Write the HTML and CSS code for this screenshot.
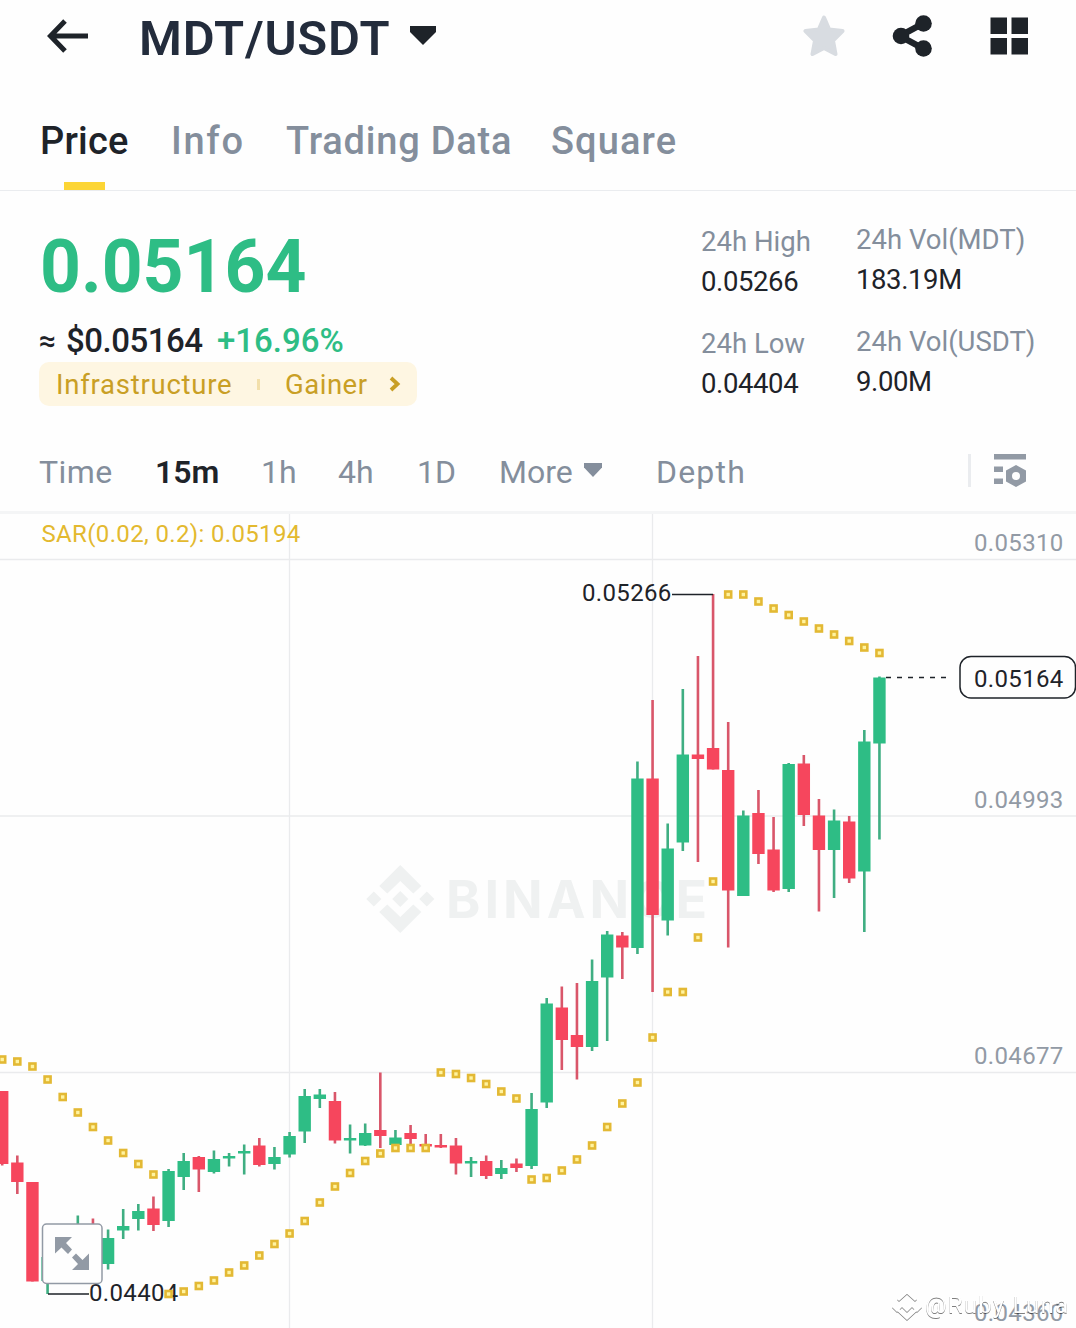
FILE: index.html
```
<!DOCTYPE html>
<html lang="en">
<head>
  <meta charset="UTF-8">
  <meta name="viewport" content="width=device-width, initial-scale=1.0">
  <title>MDT/USDT</title>
  <link rel="stylesheet" href="styles.css">
</head>
<body>
  <header>
    <svg class="back" width="42" height="34" viewBox="0 0 42 34"><path d="M41 17H4M18 2L3.500 17L18 32" fill="none" stroke="#1e2329" stroke-width="5"/></svg>
    <h1>MDT/USDT</h1>
    <svg class="pair-caret" width="26" height="19" viewBox="0 0 26 19"><path d="M0 0H26V6L13 19L0 6Z" fill="#1e2329"/></svg>
    <div class="actions">
      <svg width="42" height="42" viewBox="0 0 42 42"><path d="M21 2.500L26.200 14.500L39.500 16L30 25.500L32.500 39L21 33L9.500 39L12 25.500L2.500 16L15.800 14.500Z" fill="#d8dce1" stroke="#d8dce1" stroke-width="4" stroke-linejoin="round"/></svg>
      <svg class="share" width="40" height="42" viewBox="0 0 40 42"><path d="M32 8L8 21L32 34" fill="none" stroke="#1e2329" stroke-width="6.500"/><g fill="#1e2329"><circle cx="31.500" cy="8.500" r="8.300"/><circle cx="9" cy="21" r="8.300"/><circle cx="31.500" cy="33.500" r="8.300"/></g></svg>
      <svg class="grid-icon" width="38" height="38" viewBox="0 0 38 38"><path d="M.5.500H17V17H.5ZM21.500.500H38V17H21.500ZM.5 21H17V37.500H.5ZM21.500 21H38V37.500H21.500Z" fill="#1e2329"/></svg>
    </div>
  </header>

  <nav class="tabs">
    <a class="tab active">Price</a>
    <a class="tab info">Info</a>
    <a class="tab trading">Trading Data</a>
    <a class="tab square">Square</a>
  </nav>

  <section class="summary">
    <div class="quote">
      <div class="price">0.05164</div>
      <div class="fiat"><span class="approx">≈</span><span class="usd">$0.05164</span><span class="change">+16.96%</span></div>
      <div class="tags">
        <span class="tag-infra">Infrastructure</span>
        <i></i>
        <span class="tag-gainer">Gainer</span>
        <svg width="12" height="16" viewBox="0 0 12 16"><path d="M2 2L8.500 8L2 14" fill="none" stroke="#c99f25" stroke-width="3.800"/></svg>
      </div>
    </div>
    <div class="stats">
      <div class="stat"><span class="high">24h High</span><b>0.05266</b></div>
      <div class="stat"><span class="low">24h Low</span><b>0.04404</b></div>
    </div>
    <div class="stats volume">
      <div class="stat"><span class="vol-mdt">24h Vol(MDT)</span><b class="mdt">183.19M</b></div>
      <div class="stat"><span class="vol-usdt">24h Vol(USDT)</span><b class="usdt">9.00M</b></div>
    </div>
  </section>

  <nav class="intervals">
    <a class="time">Time</a>
    <a class="m15">15m</a>
    <a class="h1">1h</a>
    <a class="h4">4h</a>
    <a class="d1">1D</a>
    <a class="more">More</a>
    <svg class="more-caret" width="18" height="14" viewBox="0 0 18 14"><path d="M0 0H18V4.500L9 14L0 4.500Z" fill="#848e9c"/></svg>
    <a class="depth">Depth</a>
    <div class="divider"></div>
    <svg class="settings" width="32" height="33" viewBox="0 0 32 33"><path d="M0 0H32V5.500H0ZM0 12.500H9V18H0ZM0 24.500H9V30H0Z" fill="#929aa5"/><path fill-rule="evenodd" d="M22 11L32 16.500V27.500L22 33L12 27.500V16.500ZM22 18A4 4 0 1 0 22 26A4 4 0 1 0 22 18Z" fill="#929aa5"/></svg>
  </nav>

  <main class="chart">
    <!-- viewBox starts at the top edge of the chart area -->
    <svg id="chart" width="1076" height="814" viewBox="0 514 1076 814">
      <path class="grid" d="M0 559.500H1076M0 816H1076M0 1072.500H1076M289.500 514V1328M652.500 514V1328"/>
      <g class="brand">
        <g transform="translate(400.300 899)">
          <path d="M0 -34L21 -13L13 -5.500L0 -18L-13 -5.500L-21 -13Z"/>
          <path d="M0 34L21 13L13 5.500L0 18L-13 5.500L-21 13Z"/>
          <path d="M0 -8L8 0L0 8L-8 0ZM-26.500 -7.500L-19 0L-26.500 7.500L-34 0ZM26.500 -7.500L34 0L26.500 7.500L19 0Z"/>
        </g>
        <text x="446" y="918">BINANCE</text>
      </g>
      <g id="candles"></g>
      <g class="label">
        <text x="582" y="601">0.05266</text>
        <text x="89" y="1301">0.04404</text>
      </g>
      <g id="sar"></g>
      <path class="mark" d="M672 594.500H713M48 1294H89"/>
      <path class="last" d="M886 677.500H946"/>
      <text class="indicator" x="41.500" y="542">SAR(0.02, 0.2): 0.05194</text>
      <g class="axis">
        <text x="974" y="551">0.05310</text>
        <text x="974" y="808">0.04993</text>
        <text x="974" y="1064">0.04677</text>
        <text x="974" y="1321">0.04360</text>
      </g>
      <rect class="last-box" x="960" y="656.500" width="115.500" height="41.500" rx="11"/>
      <text class="last-text" x="974" y="687">0.05164</text>
      <g class="expand">
        <rect x="42.500" y="1224" width="59.500" height="59.500" rx="4"/>
        <path d="M55 1237H72L66 1243L72 1249.500L68 1254L61.500 1247.500L55 1253.500ZM89 1270H72L78 1264L72 1257.500L76 1253.500L82.500 1260L89 1253.500Z"/>
      </g>
      <g class="credit">
        <path d="M898 1300L907 1292L916 1300M893 1306L897 1310L901 1306M902 1305L907 1310L912 1305M913 1306L917 1310L921 1306M896 1308L907 1318L918 1308"/>
        <text x="925" y="1313">@Ruby Luna</text>
      </g>
    </svg>
  </main>

  <script>
    // colour, high, body top, body bottom, low
    const candles = [
      ["r", 1091, 1091, 1164, 1165.5], ["r", 1155.5, 1162.5, 1182, 1194], ["r", 1182, 1182, 1281.5, 1281.5],
      ["g", 1257, 1257, 1281, 1294], ["g", 1240, 1250, 1262, 1270], ["g", 1215.5, 1230, 1260, 1270],
      ["r", 1218.5, 1230, 1262, 1268], ["g", 1229.5, 1238, 1264, 1269.5], ["g", 1209, 1226, 1230.5, 1239],
      ["g", 1204, 1211, 1219, 1230.5], ["r", 1196.5, 1208.5, 1225, 1231], ["g", 1169, 1171, 1221, 1227],
      ["g", 1153, 1161, 1177, 1190], ["r", 1156, 1157, 1169.5, 1192], ["g", 1150.5, 1159, 1172, 1173.5],
      ["g", 1153, 1156, 1158.5, 1166.5], ["g", 1144.5, 1151, 1153.5, 1174.5], ["r", 1138, 1145.5, 1165, 1166.5],
      ["g", 1147, 1157, 1164, 1169.5], ["g", 1132, 1136, 1154.5, 1157.5], ["g", 1089, 1096, 1131.5, 1143],
      ["g", 1089, 1094.5, 1099, 1108], ["r", 1092, 1101, 1140.5, 1143.5], ["g", 1124.5, 1138, 1140.5, 1153.5],
      ["g", 1123.5, 1133, 1145.5, 1146], ["r", 1072.5, 1130, 1136, 1148], ["g", 1130, 1137.5, 1145, 1148],
      ["r", 1125, 1133, 1139, 1145], ["r", 1134, 1144, 1146.5, 1149], ["r", 1134, 1145, 1147.5, 1148],
      ["r", 1138, 1145.5, 1163.5, 1174.5], ["g", 1157, 1161, 1163.5, 1177], ["r", 1155.5, 1161, 1176, 1179],
      ["g", 1160, 1168, 1174, 1179], ["r", 1158.5, 1163.5, 1168, 1172], ["g", 1093, 1109, 1166, 1169],
      ["g", 998, 1003.5, 1102.5, 1108], ["r", 986.5, 1007.5, 1040, 1070], ["r", 983, 1035, 1047, 1079.5],
      ["g", 959.5, 981, 1047, 1051], ["g", 931, 934.5, 977.5, 1041], ["r", 932, 935.5, 947.5, 979],
      ["g", 761.5, 778.5, 948, 954], ["r", 700, 778.5, 915, 992], ["g", 823.5, 848.5, 920.5, 935.5],
      ["g", 689, 754.5, 842.5, 851], ["r", 656, 754.5, 759, 862], ["r", 594, 748, 769.5, 769.5],
      ["r", 722, 770, 890.5, 947.5], ["g", 810.5, 815.5, 896, 896], ["r", 790, 813, 854, 864],
      ["r", 817, 849.5, 890.5, 892], ["g", 763, 764, 889, 892], ["r", 755, 763.5, 815, 826],
      ["r", 799, 815.5, 850, 911.5], ["g", 809.5, 820.5, 850, 898], ["r", 816, 821.5, 878.5, 883],
      ["g", 730, 741.5, 871.5, 932], ["g", 676.5, 677.5, 743.5, 839.5]
    ];
    const sar = [
      1059.5, 1061.5, 1066.5, 1079.5, 1097, 1112.5, 1127, 1140.5, 1153, 1164, 1174.5,
      1294, 1291.5, 1286, 1280.5, 1272.5, 1265.5, 1255.5, 1244, 1233.5, 1221, 1202.5, 1186.5, 1173, 1161, 1153.5, 1148, 1148, 1148,
      1072.5, 1074, 1078, 1084, 1091.5, 1098.5,
      1179.5, 1178, 1170.5, 1159.5, 1145.5, 1127, 1103.5, 1082.5, 1037.5, 992, 992, 937.5, 881.5,
      594.5, 594.5, 601.5, 608.5, 615, 621.5, 628.5, 634.5, 641, 647.5, 653
    ];
    const x = i => 2.2 + i * 15.125;

    document.getElementById("candles").innerHTML = candles.map(([c, high, top, bottom, low], i) => `
      <g class="${c}">
        <rect class="wick" x="${x(i) - 1.3}" y="${high}" width="2.6" height="${low - high}"/>
        <rect x="${x(i) - 6.2}" y="${top}" width="12.4" height="${bottom - top}"/>
      </g>`).join("");

    document.getElementById("sar").innerHTML = sar.map((y, i) =>
      `<rect x="${x(i) - 3}" y="${y - 3}" width="6" height="6"/>`).join("");
  </script>
</body>
</html>
```
FILE: styles.css
```
* {
  box-sizing: border-box;
}

body {
  margin: 0;
  width: 1076px;
  height: 1328px;
  overflow: hidden;
  background: #fefefe;
  color: #1e2329;
  font-family: Roboto, "Liberation Sans", sans-serif;
}

svg {
  display: block;
  flex: none;
}

header {
  display: flex;
  align-items: center;
  height: 74px;
  padding: 0 48px 2px 47px;
}

h1 {
  margin: 5px 0 0 50px;
  width: 250px;
  white-space: nowrap;
  font-size: 49px;
  line-height: 60px;
  font-weight: 600;
  letter-spacing: 0.8px;
  color: #232c3c;
}

.pair-caret {
  margin: -2px 0 0 21px;
}

.actions {
  display: flex;
  align-items: center;
  margin-left: auto;
}

.share {
  margin-left: 47px;
}

.grid-icon {
  margin-left: 58px;
}

.tabs {
  display: flex;
  height: 117px;
  padding-left: 40px;
  border-bottom: 1px solid #eaecef;
}

.tab {
  position: relative;
  height: 116px;
  padding-top: 42px;
  line-height: 50px;
  font-size: 38px;
  font-weight: 500;
  color: #848e9c;
  white-space: nowrap;
}

.tab.active {
  width: 131px;
  color: #1e2329;
  letter-spacing: 0.2px;
}

.tab.active::after {
  content: "";
  position: absolute;
  left: 24px;
  bottom: 0;
  width: 41px;
  height: 8px;
  background: #fcd535;
}

.tab.info {
  width: 115px;
  letter-spacing: 1.7px;
}

.tab.trading {
  width: 265px;
  letter-spacing: 0.8px;
}

.tab.square {
  letter-spacing: 1.1px;
}

.summary {
  display: flex;
  height: 239px;
  padding-left: 39px;
}

.quote {
  width: 662px;
  padding-top: 35px;
}

.price {
  height: 81px;
  padding-left: 1px;
  line-height: 80px;
  font-size: 75px;
  font-weight: 700;
  color: #2ebd85;
  transform: scaleX(0.952);
  transform-origin: left;
}

.fiat {
  display: flex;
  height: 55px;
  padding-top: 13px;
  line-height: 42px;
  font-size: 33px;
  font-weight: 500;
  white-space: nowrap;
}

.approx {
  width: 27px;
  font-size: 30px;
}

.usd {
  width: 151px;
  letter-spacing: -0.5px;
}

.change {
  color: #2ebd85;
}

.tags {
  display: flex;
  align-items: center;
  width: 378px;
  height: 44px;
  padding-left: 17px;
  border-radius: 10px;
  background: #fef6e2;
  color: #c99f25;
  font-size: 27.5px;
  white-space: nowrap;
}

.tag-infra {
  width: 201px;
  letter-spacing: 0.75px;
}

.tags i {
  width: 3px;
  height: 11px;
  margin-right: 25px;
  background: #f2dfaa;
}

.tag-gainer {
  width: 104px;
  letter-spacing: 0.5px;
}

.stats {
  width: 155px;
  padding-top: 31px;
}

.volume {
  width: 215px;
  padding-top: 29px;
}

.stat {
  height: 102px;
  white-space: nowrap;
}

.stat span,
.stat b {
  display: block;
  height: 40px;
  line-height: 40px;
  font-size: 27.5px;
  font-weight: 400;
}

.stat span {
  color: #848e9c;
}

.stat b {
  letter-spacing: -0.4px;
}

.intervals {
  display: flex;
  align-items: center;
  height: 84px;
  padding-left: 39px;
  border-bottom: 3px solid #f4f5f6;
  color: #848e9c;
  font-size: 32px;
  white-space: nowrap;
}

.intervals a {
  padding-top: 2px;
  line-height: 40px;
}

.time {
  width: 116px;
  letter-spacing: 0.4px;
}

.m15 {
  width: 106px;
  font-weight: 600;
  color: #1e2329;
}

.h1 {
  width: 77px;
}

.h4 {
  width: 79px;
}

.d1 {
  width: 82px;
}

.more {
  width: 85px;
}

.more-caret {
  margin: -2px 54px 0 0;
}

.depth {
  width: 312px;
  letter-spacing: 1.2px;
}

.divider {
  width: 3px;
  height: 33px;
  margin-right: 23px;
  background: #eaecef;
}

.chart text {
  font-size: 24px;
  letter-spacing: 0.35px;
}

.grid {
  fill: none;
  stroke: #eaebed;
  stroke-width: 1.3;
}

.brand {
  fill: #eff1f1;
}

.chart .brand text {
  font-family: Inter, "Liberation Sans", sans-serif;
  font-size: 52px;
  font-weight: 700;
  letter-spacing: 4px;
}

.g {
  fill: #2ebd85;
}

.r {
  fill: #f6465d;
}

.g .wick {
  fill: #3fae82;
}

.r .wick {
  fill: #d9566a;
}

#sar rect {
  fill: #fff3a0;
  stroke: #e3b934;
  stroke-width: 2.6;
}

.label,
.last-text {
  fill: #1e2329;
}

.mark {
  fill: none;
  stroke: #1e2329;
  stroke-width: 1.4;
}

.last {
  stroke: #1e2329;
  stroke-width: 1.5;
  stroke-dasharray: 5 6;
}

.indicator {
  fill: #e3b92f;
}

.axis {
  fill: #929aa5;
}

.last-box {
  fill: #fefefe;
  stroke: #1e2329;
  stroke-width: 1.5;
}

.expand rect {
  fill: #fefefe;
  stroke: #929aa5;
  stroke-width: 1.5;
}

.expand path {
  fill: #929aa5;
}

.credit {
  fill: #fff;
  filter: drop-shadow(0.5px 1px 0.6px rgba(0, 0, 0, 0.5));
}

.chart .credit text {
  letter-spacing: 1.2px;
}

.credit path {
  fill: none;
  stroke: #fff;
  stroke-width: 3;
}
```
